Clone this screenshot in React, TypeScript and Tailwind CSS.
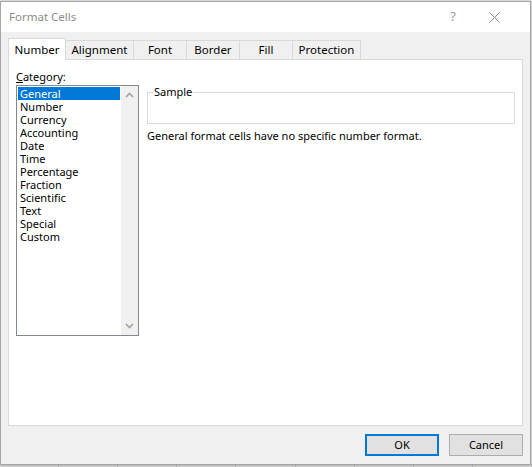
import React from 'react'

const tabs = [
  { name: 'Number', w: 'w-[58px]' },
  { name: 'Alignment', w: 'w-[68px]' },
  { name: 'Font', w: 'w-[53px]' },
  { name: 'Border', w: 'w-[53px]' },
  { name: 'Fill', w: 'w-[53px]' },
  { name: 'Protection', w: 'w-[68px]' },
]

const categories = [
  'General',
  'Number',
  'Currency',
  'Accounting',
  'Date',
  'Time',
  'Percentage',
  'Fraction',
  'Scientific',
  'Text',
  'Special',
  'Custom',
]

const Chevron: React.FC<{ down?: boolean }> = ({ down }) => (
  <svg width="9" height="6" viewBox="0 0 9 6" className="block">
    <path
      d={down ? 'M1 1 L4.5 4.5 L8 1' : 'M1 5 L4.5 1.5 L8 5'}
      fill="none"
      stroke="#a3a3a3"
      strokeWidth="1.6"
    />
  </svg>
)

export default function App() {
  return (
    <div
      className="relative h-[467px] w-[532px] overflow-hidden bg-[#e3e3e3] pt-px text-[11px] text-black"
      style={{ fontFamily: '"Noto Sans", "Segoe UI", sans-serif' }}
    >
      {/* spreadsheet grid peeking out behind the dialog */}
      <div className="absolute inset-x-0 bottom-0 flex h-[3px]">
        {Array.from({ length: 9 }).map((_, i) => (
          <div key={i} className="h-full w-[64px] border-r border-[#bdbdbd]" />
        ))}
      </div>

      <div className="relative flex h-[464px] w-[531px] flex-col border border-[#a6a6a6] bg-[#f0f0f0] shadow-[0_1px_3px_rgba(0,0,0,0.25)]">
        {/* title bar */}
        <div className="flex h-[30px] items-center bg-white pl-[8px] pr-[30px]">
          <span className="flex-1 text-[11.5px] text-[#8c8c8c]">Format Cells</span>
          <span className="mr-[33px] text-[13px] text-[#9a9a9a]">?</span>
          <svg width="11" height="11" viewBox="0 0 11 11">
            <path d="M0.5 0.5 L10.5 10.5 M10.5 0.5 L0.5 10.5" stroke="#8a8a8a" strokeWidth="1" />
          </svg>
        </div>

        <div className="flex flex-1 flex-col px-[7px] pt-[6px]">
          {/* tabs */}
          <div className="flex h-[21px] items-end">
            {tabs.map((t, i) =>
              i === 0 ? (
                <div
                  key={t.name}
                  className={`${t.w} relative z-10 -mb-px flex h-[22px] items-start justify-center border border-b-0 border-[#d9d9d9] bg-white pt-[2px] text-[11.5px]`}
                >
                  {t.name}
                </div>
              ) : (
                <div
                  key={t.name}
                  className={`${t.w} flex h-[19px] items-center justify-center border-r border-t border-[#d9d9d9] bg-[#f0f0f0] pb-px text-[11.5px]`}
                >
                  {t.name}
                </div>
              ),
            )}
          </div>

          {/* tab panel */}
          <div className="flex h-[367px] w-[515px] border border-[#d9d9d9] bg-white pl-[7px] pt-[8px]">
            <div className="flex w-[123px] flex-col">
              <div className="h-[17px] leading-[17px]">
                <span className="underline">C</span>ategory:
              </div>
              <div className="flex h-[251px] border border-[#828790] bg-white">
                <div className="flex-1 p-px">
                  {categories.map((c, i) => (
                    <div
                      key={c}
                      className={`h-[13px] pl-[2px] leading-[13px] ${
                        i === 0 ? 'bg-[#0078d7] text-white' : ''
                      }`}
                    >
                      {c}
                    </div>
                  ))}
                </div>
                <div className="flex w-[17px] flex-col items-center justify-between bg-[#f0f0f0] py-[6px]">
                  <Chevron />
                  <Chevron down />
                </div>
              </div>
            </div>

            <div className="ml-[8px] flex flex-col pt-[24px]">
              <div className="relative h-[32px] w-[368px] border border-[#dcdcdc]">
                <span className="absolute -top-[9px] left-[5px] bg-white px-px leading-[16px]">
                  Sample
                </span>
              </div>
              <div className="mt-[4px] leading-[16px]">
                General format cells have no specific number format.
              </div>
            </div>
          </div>

          {/* buttons */}
          <div className="flex justify-end gap-[10px] pt-[8px]">
            <button className="h-[22px] w-[74px] border-2 border-[#0078d7] bg-[#e1e1e1] leading-[18px]">
              OK
            </button>
            <button className="h-[22px] w-[74px] border border-[#adadad] bg-[#e1e1e1]">
              Cancel
            </button>
          </div>
        </div>
      </div>
    </div>
  )
}
